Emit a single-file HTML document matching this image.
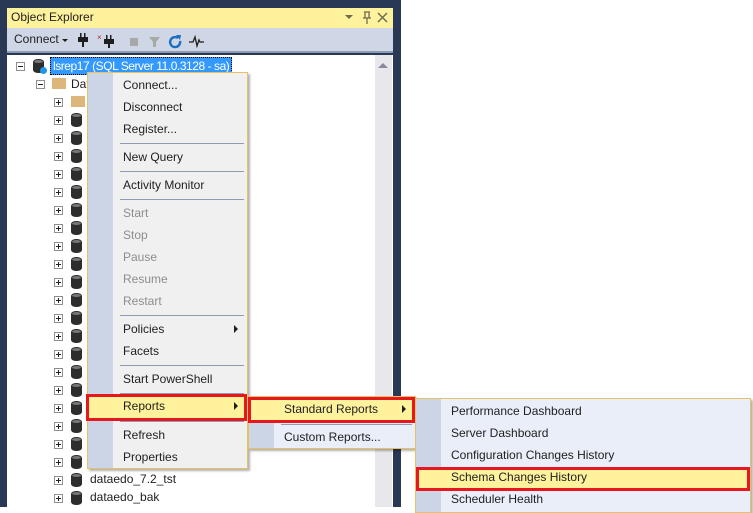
<!DOCTYPE html>
<html><head><meta charset="utf-8"><style>
*{margin:0;padding:0;box-sizing:border-box}
body{width:753px;height:507px;overflow:hidden;background:#fff;font-family:"Segoe UI","Liberation Sans",sans-serif;font-size:12px;color:#1e1e1e;position:relative}
.abs{position:absolute}
#frame{left:0;top:0;width:401px;height:507px;background:#293955}
#title{left:7px;top:8px;width:386px;height:20px;background:#fff29d;color:#1e1e1e;padding:2px 0 0 4px}
#tb{left:7px;top:28px;width:386px;height:25px;background:#cfd6e5;border-bottom:2px solid #8e9bb0}
#tree{left:7px;top:55px;width:386px;height:452px;background:#fff}
#sb{left:375px;top:55px;width:17px;height:452px;background:#e8e8ec}
.row{position:absolute;height:18px;line-height:18px;white-space:nowrap}
.pb{position:absolute;width:9px;height:9px;border:1px solid #8f8f8f;background:#fff}
.pb:before{content:"";position:absolute;left:1px;top:3px;width:5px;height:1px;background:#222}
.pb.p:after{content:"";position:absolute;left:3px;top:1px;width:1px;height:5px;background:#222}
.db{position:absolute;width:11px;height:14px;background:#2d2d2d;border-radius:5px/3px}
.db:before{content:"";position:absolute;left:1px;top:1px;width:9px;height:3px;border-radius:50%;background:#777}
.fold{position:absolute;width:14px;height:11px;background:#dcb67a}
.menu{position:absolute;border:1px solid #e5c365;box-shadow:2px 2px 2px rgba(0,0,0,.3)}
.gut{position:absolute;left:0;top:0;bottom:0;width:25px;background:#ccd5e5}
.it{position:absolute;left:0;right:0;height:22px;line-height:20px;white-space:nowrap}
.it span{position:absolute;left:35px}
.dis{color:#8d8d8d}
.sep{position:absolute;left:32px;right:3px;height:1px;background:#8e9bb0}
.arr{position:absolute;right:9px;top:6px;width:0;height:0;border-top:4px solid transparent;border-bottom:4px solid transparent;border-left:4px solid #1e1e1e}
.red{position:absolute;border:3px solid #e7171f;background:#fff29d}
</style></head><body>
<div id="frame" class="abs"></div>
<div id="title" class="abs">Object Explorer
<span class="abs" style="left:338px;top:7px;width:0;height:0;border-left:4px solid transparent;border-right:4px solid transparent;border-top:4px solid #6f6a50"></span>
<svg class="abs" style="left:355px;top:3px" width="10" height="13"><path d="M2 1h6M3 1v6M7 1v6M1 7h8M5 7v6" stroke="#6f6a50" stroke-width="1.3" fill="none"/></svg>
<svg class="abs" style="left:370px;top:4px" width="11" height="11"><path d="M1 1l9 9M10 1l-9 9" stroke="#6f6a50" stroke-width="1.5"/></svg>
</div>
<div id="tb" class="abs">
<span class="abs" style="left:7px;top:4px">Connect</span>
<span class="abs" style="left:55px;top:11px;border-left:3px solid transparent;border-right:3px solid transparent;border-top:3px solid #1e1e1e"></span>
<svg class="abs" style="left:70px;top:5px" width="140" height="16">
<g fill="#1e1e1e"><rect x="3" y="0" width="1.5" height="4"/><rect x="7" y="0" width="1.5" height="4"/><rect x="1" y="4" width="10" height="5"/><rect x="5" y="9" width="2" height="5"/></g>
<g fill="#1e1e1e"><rect x="29" y="2" width="1.5" height="4"/><rect x="33" y="2" width="1.5" height="4"/><rect x="27" y="6" width="10" height="5"/><rect x="31" y="11" width="2" height="4"/></g>
<text x="20" y="7" font-size="8" fill="#c1272d" font-family="Liberation Sans">×</text>
<rect x="53" y="5" width="8" height="8" fill="#a8a8a8"/>
<path d="M72 4h11l-4 5v5h-3v-5z" fill="#a8a8a8"/>
<path d="M101 5a5 5 0 1 0 2 3" stroke="#1c6ec2" stroke-width="2.4" fill="none"/><path d="M99 2l5 0-1 5z" fill="#1c6ec2"/>
<path d="M112 9h4l2-5 2 9 2-6 1 2h4" stroke="#1e1e1e" stroke-width="1.3" fill="none"/>
</svg>
</div>
<div id="tree" class="abs"></div>
<div id="sb" class="abs"><span class="abs" style="left:3px;top:8px;border-left:5px solid transparent;border-right:5px solid transparent;border-bottom:5px solid #868999"></span></div>

<div class="pb" style="left:16px;top:62px"></div>
<div class="db" style="left:33px;top:59px"></div>
<div class="abs" style="left:40px;top:67px;width:7px;height:7px;border-radius:50%;background:#1c97ea"></div>
<div class="row" style="left:50px;top:57px;background:#3399ff;color:#fff;border:1px dotted #000;padding:0 2px;line-height:16px;letter-spacing:-0.45px">lsrep17 (SQL Server 11.0.3128 - sa)</div>
<div class="pb" style="left:36px;top:80px"></div>
<div class="fold" style="left:52px;top:78px"></div>
<div class="row" style="left:71px;top:75px">Dat</div>
<div class="pb p" style="left:54px;top:98px"></div>
<div class="fold" style="left:71px;top:96px"></div>
<div id="rows"></div>
<div class="row" style="left:90px;top:470px">dataedo_7.2_tst</div>
<div class="row" style="left:90px;top:488px">dataedo_bak</div>

<div class="menu" style="left:87px;top:72px;width:161px;height:397px;background:#f0f0f0">
<div class="gut"></div>
<div class="it" style="top:2px"><span>Connect...</span></div>
<div class="it" style="top:24px"><span>Disconnect</span></div>
<div class="it" style="top:46px"><span>Register...</span></div>
<div class="sep" style="top:70px"></div>
<div class="it" style="top:74px"><span>New Query</span></div>
<div class="sep" style="top:98px"></div>
<div class="it" style="top:102px"><span>Activity Monitor</span></div>
<div class="sep" style="top:126px"></div>
<div class="it dis" style="top:130px"><span>Start</span></div>
<div class="it dis" style="top:152px"><span>Stop</span></div>
<div class="it dis" style="top:174px"><span>Pause</span></div>
<div class="it dis" style="top:196px"><span>Resume</span></div>
<div class="it dis" style="top:218px"><span>Restart</span></div>
<div class="sep" style="top:242px"></div>
<div class="it" style="top:246px"><span>Policies</span><i class="arr"></i></div>
<div class="it" style="top:268px"><span>Facets</span></div>
<div class="sep" style="top:292px"></div>
<div class="it" style="top:296px"><span>Start PowerShell</span></div>
<div class="sep" style="top:320px"></div>
<div class="red" style="left:-2px;top:321px;width:161px;height:27px"></div>
<div class="it" style="top:323px"><span>Reports</span><i class="arr"></i></div>
<div class="sep" style="top:348px"></div>
<div class="it" style="top:352px"><span>Refresh</span></div>
<div class="it" style="top:374px"><span>Properties</span></div>
</div>

<div class="menu" style="left:248px;top:396px;width:168px;height:53px;background:#e9eef8">
<div class="gut"></div>
<div class="red" style="left:-1px;top:0px;width:167px;height:26px"></div>
<div class="it" style="top:2px"><span>Standard Reports</span><i class="arr"></i></div>
<div class="sep" style="top:27px"></div>
<div class="it" style="top:30px"><span>Custom Reports...</span></div>
</div>

<div class="menu" style="left:415px;top:398px;width:336px;height:115px;background:#e9eef8">
<div class="gut"></div>
<div class="it" style="top:2px"><span>Performance Dashboard</span></div>
<div class="it" style="top:24px"><span>Server Dashboard</span></div>
<div class="it" style="top:46px"><span>Configuration Changes History</span></div>
<div class="red" style="left:0px;top:68px;width:334px;height:24px"></div>
<div class="it" style="top:68px"><span>Schema Changes History</span></div>
<div class="it" style="top:90px"><span>Scheduler Health</span></div>
</div>
<script>
var h='';for(var y=116;y<=494;y+=18){h+='<div class="pb p" style="left:54px;top:'+(y)+'px"></div><div class="db" style="left:71px;top:'+(y-3)+'px"></div>';}
document.getElementById('rows').innerHTML=h;
</script>
</body></html>
